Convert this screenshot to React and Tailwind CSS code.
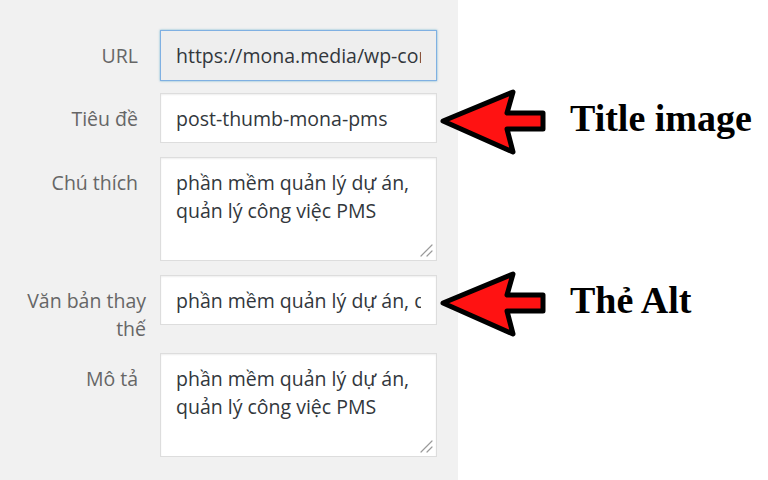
import React from 'react';

const Grip = () => (
  <svg className="absolute right-[3px] bottom-[3px]" width="14" height="14" viewBox="0 0 14 14">
    <path d="M13 2 L2 13 M13 8 L8 13" stroke="#9a9a9a" strokeWidth="1.2" strokeLinecap="round" />
  </svg>
);

const Field = ({ value, focused }) => (
  <div
    className={
      focused
        ? 'w-[277px] h-[51px] border border-[#7fb0e2] bg-[#eeeeee] shadow-[0_0_2px_rgba(30,140,190,0.6)] pl-[15px] pr-[15px] pt-[11px]'
        : 'w-[277px] h-[50px] border border-[#dddddd] bg-white shadow-[inset_0_1px_2px_rgba(0,0,0,0.07)] pl-[15px] pr-[15px] pt-[11px]'
    }
  >
    <div className="overflow-hidden whitespace-nowrap">{value}</div>
  </div>
);

const Area = ({ lines }) => (
  <div className="relative w-[277px] h-[104px] border border-[#dddddd] bg-white shadow-[inset_0_1px_2px_rgba(0,0,0,0.07)] pl-[15px] pr-[15px] pt-[11px]">
    {lines.map((l) => (
      <div key={l} className="whitespace-nowrap">{l}</div>
    ))}
    <Grip />
  </div>
);

const Row = ({ label, wide, className, children }) => (
  <div className={'flex items-start ' + className}>
    <div className={'w-[160px] pl-[18px] text-right text-[#666666] pt-[12px] ' + (wide ? 'pr-[14px]' : 'pr-[22px]')}>
      {label}
    </div>
    {children}
  </div>
);

const Arrow = ({ top }) => (
  <svg className="absolute left-[436px]" style={{ top }} width="114" height="70" viewBox="436 0 114 70">
    <polygon
      points="443,35 513,6 507,27 543,27 543,43 507,43 513,66"
      fill="#ff1212"
      stroke="#000000"
      strokeWidth="5"
      strokeLinejoin="round"
    />
  </svg>
);

export default function App() {
  const desc = ['phần mềm quản lý dự án,', 'quản lý công việc PMS'];
  return (
    <div
      className="relative flex w-[768px] h-[480px] bg-white overflow-hidden text-[19.5px] leading-[28px] text-[#32373c]"
      style={{ fontFamily: '"Open Sans", "Noto Sans", sans-serif' }}
    >
      <div className="w-[458px] h-full bg-[#f1f1f1] pt-[30px]">
        <Row label="URL">
          <Field value="https://mona.media/wp-content/uploads/post-thumb-mona-pms.png" focused />
        </Row>
        <Row label="Tiêu đề" className="mt-[12px]">
          <Field value="post-thumb-mona-pms" />
        </Row>
        <Row label="Chú thích" className="mt-[14px]">
          <Area lines={desc} />
        </Row>
        <Row label="Văn bản thay thế" wide className="mt-[14px]">
          <Field value="phần mềm quản lý dự án, quản lý công việc PMS" />
        </Row>
        <Row label="Mô tả" className="mt-[10px]">
          <Area lines={desc} />
        </Row>
      </div>

      <Arrow top={86} />
      <Arrow top={268} />
      <div
        className="absolute left-[570px] top-[96px] text-[38px] leading-[44px] font-bold text-black whitespace-nowrap"
        style={{ fontFamily: '"Liberation Serif", serif' }}
      >
        Title image
      </div>
      <div
        className="absolute left-[570px] top-[278px] text-[38px] leading-[44px] font-bold text-black whitespace-nowrap"
        style={{ fontFamily: '"Liberation Serif", serif' }}
      >
        Thẻ Alt
      </div>
    </div>
  );
}
